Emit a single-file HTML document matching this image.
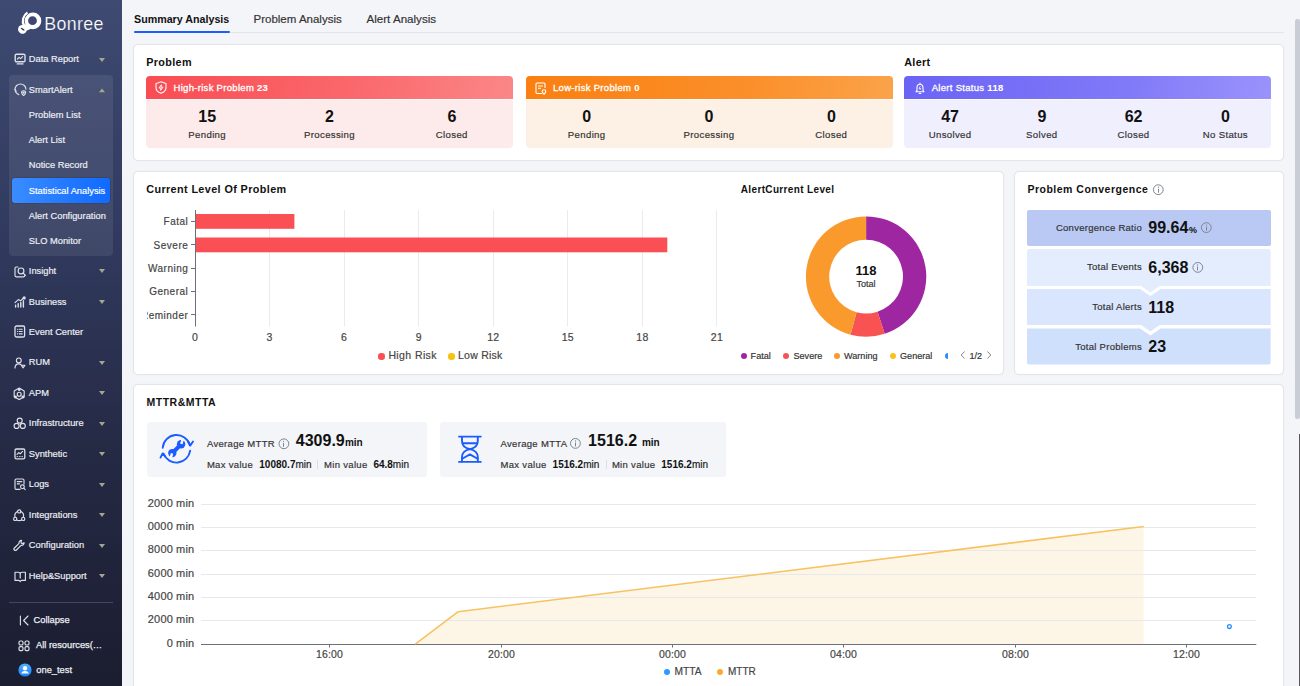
<!DOCTYPE html>
<html><head><meta charset="utf-8"><style>
html,body{margin:0;padding:0;width:1300px;height:686px;overflow:hidden;font-family:"Liberation Sans",sans-serif;background:#f3f4f8;}
text{font-family:"Liberation Sans",sans-serif;}
.r{position:absolute;}
</style></head><body>
<div class="r" style="left:0px;top:0px;width:122px;height:686px;background:linear-gradient(180deg,#3e4a72 0%,#313a5e 35%,#252a45 65%,#1b1d30 100%);"></div>
<svg class="r" style="left:15px;top:8px" width="30" height="28" viewBox="0 0 30 28">
<path d="M12.06 3.40 A11.4 11.4 0 0 0 8.13 18.60 L10.21 17.40 A9 9 0 0 1 12.97 5.44 Z" fill="#fff"/>
<path fill-rule="evenodd" d="M26.3 12.9 A8.3 8.3 0 1 1 9.7 12.9 A8.3 8.3 0 1 1 26.3 12.9 Z M21.9 12.7 A4.4 4.4 0 1 0 13.1 12.7 A4.4 4.4 0 1 0 21.9 12.7 Z" fill="#fff"/>
<path d="M8.2 17.2 L12.2 15.8 L16.5 20.6 L11.5 22.8 Z" fill="#fff"/>
<ellipse cx="7.4" cy="21.4" rx="4.3" ry="4.5" transform="rotate(-30 7.4 21.4)" fill="#fff"/>
<ellipse cx="7.6" cy="21.1" rx="2.3" ry="0.7" transform="rotate(34 7.6 21.1)" fill="#28335c"/>
</svg>
<div class="r" style="left:9px;top:75px;width:104px;height:181px;background:rgba(255,255,255,0.08);border-radius:4px;"></div>
<div class="r" style="left:12px;top:178px;width:98px;height:25px;background:linear-gradient(90deg,#3a8cff,#0f6aff);border-radius:3px;box-shadow:0 0 0 0.6px rgba(40,30,40,0.35);"></div>
<svg class="r" style="left:99px;top:57.5px" width="6" height="5" viewBox="0 0 6 5"><path d="M0 0 L3 4 L6 0Z" fill="#a7a592"/></svg>
<svg class="r" style="left:99px;top:87.6px" width="6" height="5" viewBox="0 0 6 5"><path d="M0 4.2 L3 0.4 L6 4.2Z" fill="#a7a592"/></svg>
<svg class="r" style="left:99px;top:269.2px" width="6" height="5" viewBox="0 0 6 5"><path d="M0 0 L3 4 L6 0Z" fill="#a7a592"/></svg>
<svg class="r" style="left:99px;top:299.7px" width="6" height="5" viewBox="0 0 6 5"><path d="M0 0 L3 4 L6 0Z" fill="#a7a592"/></svg>
<svg class="r" style="left:99px;top:360.6px" width="6" height="5" viewBox="0 0 6 5"><path d="M0 0 L3 4 L6 0Z" fill="#a7a592"/></svg>
<svg class="r" style="left:99px;top:391.1px" width="6" height="5" viewBox="0 0 6 5"><path d="M0 0 L3 4 L6 0Z" fill="#a7a592"/></svg>
<svg class="r" style="left:99px;top:421.6px" width="6" height="5" viewBox="0 0 6 5"><path d="M0 0 L3 4 L6 0Z" fill="#a7a592"/></svg>
<svg class="r" style="left:99px;top:452.1px" width="6" height="5" viewBox="0 0 6 5"><path d="M0 0 L3 4 L6 0Z" fill="#a7a592"/></svg>
<svg class="r" style="left:99px;top:482.6px" width="6" height="5" viewBox="0 0 6 5"><path d="M0 0 L3 4 L6 0Z" fill="#a7a592"/></svg>
<svg class="r" style="left:99px;top:513.0999999999999px" width="6" height="5" viewBox="0 0 6 5"><path d="M0 0 L3 4 L6 0Z" fill="#a7a592"/></svg>
<svg class="r" style="left:99px;top:543.5999999999999px" width="6" height="5" viewBox="0 0 6 5"><path d="M0 0 L3 4 L6 0Z" fill="#a7a592"/></svg>
<svg class="r" style="left:99px;top:574.0999999999999px" width="6" height="5" viewBox="0 0 6 5"><path d="M0 0 L3 4 L6 0Z" fill="#a7a592"/></svg>
<svg class="r" style="left:13.6px;top:53.4px" width="13" height="13" viewBox="0 0 13 13"><g fill="none" stroke="#dfe1e8" stroke-width="1.15" stroke-linecap="round" stroke-linejoin="round"><rect x="1.2" y="1.2" width="9.8" height="7.6" rx="1.3" stroke-width="1.4"/><path d="M3.4 6.2 L5 4.4 L6.6 5.6 L8.6 3.6"/><path d="M3.2 10.9 H9" stroke-width="1.3"/></g></svg>
<svg class="r" style="left:13.8px;top:82.6px" width="13" height="13" viewBox="0 0 13 13"><g fill="none" stroke="#dfe1e8" stroke-width="1.15" stroke-linecap="round" stroke-linejoin="round"><path d="M4.8 11.6 C2.5 10.6 1 8.6 1 6.3 C1 3.3 3.5 1 6.5 1 C9.4 1 11.8 3.2 11.9 6.1"/><path d="M1 6.3 L2.2 8.2"/><path d="M9.6 12.6 C8.4 11.6 7.6 10.6 7.6 9.6 C7.6 8.5 8.5 7.7 9.6 7.7 C10.7 7.7 11.6 8.5 11.6 9.6 C11.6 10.6 10.8 11.6 9.6 12.6 Z"/><circle cx="9.6" cy="9.6" r="0.6" fill="#dfe1e8"/></g></svg>
<svg class="r" style="left:13.5px;top:265.8px" width="13" height="13" viewBox="0 0 13 13"><g fill="none" stroke="#dfe1e8" stroke-width="1.15" stroke-linecap="round" stroke-linejoin="round"><path d="M4 1 H2.2 Q1 1 1 2.2 V9.6 Q1 10.8 2.2 10.8 H9.6 Q10.8 10.8 10.8 9.6 V9"/><circle cx="7" cy="4.9" r="2.9"/><path d="M9.1 7 L11.4 9.4"/></g></svg>
<svg class="r" style="left:13.8px;top:295.6px" width="13" height="13" viewBox="0 0 13 13"><g fill="none" stroke="#dfe1e8" stroke-width="1.15" stroke-linecap="round" stroke-linejoin="round"><path d="M1.6 11 V9.2 M4.2 11 V7.6 M6.8 11 V6.4 M9.4 11 V4.8" stroke-width="1.4"/><path d="M1 6.6 L4.4 3.6 L6.6 4.8 L9.4 2"/><circle cx="10.2" cy="1.9" r="1" fill="#dfe1e8"/></g></svg>
<svg class="r" style="left:14.1px;top:325.3px" width="13" height="13" viewBox="0 0 13 13"><g fill="none" stroke="#dfe1e8" stroke-width="1.15" stroke-linecap="round" stroke-linejoin="round"><rect x="1" y="1" width="9.6" height="11" rx="1.6" stroke-width="1.3"/><path d="M3.4 4.2 H3.6 M5.2 4.2 H8.2 M3.4 6.5 H3.6 M5.2 6.5 H8.2 M3.4 8.8 H3.6 M5.2 8.8 H8.2"/></g></svg>
<svg class="r" style="left:14px;top:356.6px" width="13" height="13" viewBox="0 0 13 13"><g fill="none" stroke="#dfe1e8" stroke-width="1.15" stroke-linecap="round" stroke-linejoin="round"><circle cx="4.8" cy="3.4" r="2.4"/><path d="M1 11 C1 8.4 2.7 6.9 4.8 6.9 C5.6 6.9 6.3 7.1 6.9 7.4"/><path d="M7.2 8.2 H11 L9.1 10.8 Z"/></g></svg>
<svg class="r" style="left:13.3px;top:386.8px" width="13" height="13" viewBox="0 0 13 13"><g fill="none" stroke="#dfe1e8" stroke-width="1.15" stroke-linecap="round" stroke-linejoin="round"><path d="M6.2 1 L11.2 3.9 V9.7 L6.2 12.6 L1.2 9.7 V3.9 Z"/><circle cx="6.2" cy="7.2" r="2"/><circle cx="6.2" cy="2.6" r="0.9" fill="#dfe1e8"/><circle cx="2.4" cy="10" r="0.9" fill="#dfe1e8"/><circle cx="10" cy="10" r="0.9" fill="#dfe1e8"/></g></svg>
<svg class="r" style="left:13.1px;top:417.4px" width="13" height="13" viewBox="0 0 13 13"><g fill="none" stroke="#dfe1e8" stroke-width="1.15" stroke-linecap="round" stroke-linejoin="round"><circle cx="6.7" cy="3.6" r="2.5"/><circle cx="3.6" cy="8.9" r="2.5"/><circle cx="9.8" cy="8.9" r="2.5"/></g></svg>
<svg class="r" style="left:14px;top:447.9px" width="13" height="13" viewBox="0 0 13 13"><g fill="none" stroke="#dfe1e8" stroke-width="1.15" stroke-linecap="round" stroke-linejoin="round"><rect x="1" y="1" width="9.8" height="9.8" rx="1.4" stroke-width="1.3"/><path d="M3 6.4 L4.8 4.6 L6.2 5.8 L8.6 3.4"/><path d="M3 8.6 H3.8 M5.4 8.6 H6.2 M7.8 8.6 H8.6" stroke-width="0.9"/></g></svg>
<svg class="r" style="left:14px;top:478.1px" width="13" height="13" viewBox="0 0 13 13"><g fill="none" stroke="#dfe1e8" stroke-width="1.15" stroke-linecap="round" stroke-linejoin="round"><path d="M6 11.4 H2.2 Q1 11.4 1 10.2 V2.2 Q1 1 2.2 1 H8.8 Q10 1 10 2.2 V6"/><path d="M3.2 3.6 H7.8 M3.2 5.8 H5.6"/><circle cx="8.4" cy="8.8" r="1.9"/><path d="M9.8 10.2 L11.2 11.6"/></g></svg>
<svg class="r" style="left:13.3px;top:509px" width="13" height="13" viewBox="0 0 13 13"><g fill="none" stroke="#dfe1e8" stroke-width="1.15" stroke-linecap="round" stroke-linejoin="round"><path d="M4.4 2.6 A5 5 0 0 0 2 8.2 M10.4 8.2 A5 5 0 0 0 8 2.6 M3.8 10.9 A5 5 0 0 0 8.6 10.9"/><circle cx="6.2" cy="2.4" r="1.6"/><circle cx="2.2" cy="9.9" r="1.6"/><circle cx="10.2" cy="9.9" r="1.6"/></g></svg>
<svg class="r" style="left:13.3px;top:538.6px" width="13" height="13" viewBox="0 0 13 13"><g fill="none" stroke="#dfe1e8" stroke-width="1.15" stroke-linecap="round" stroke-linejoin="round"><path d="M8.6 1.2 C7 1.2 5.8 2.6 6.1 4.3 L1.4 9 C0.8 9.6 0.8 10.4 1.4 11 C2 11.6 2.8 11.6 3.4 11 L8.1 6.3 C9.8 6.6 11.2 5.4 11.2 3.8 L9.6 4.4 L8.2 4.2 L8 2.8 Z"/></g></svg>
<svg class="r" style="left:13.6px;top:569.6px" width="13" height="13" viewBox="0 0 13 13"><g fill="none" stroke="#dfe1e8" stroke-width="1.15" stroke-linecap="round" stroke-linejoin="round"><path d="M1 2.2 V10.4 H4.6 C5.3 10.4 5.8 10.8 6.2 11.6 C6.6 10.8 7.1 10.4 7.8 10.4 H11.4 V2.2 H8 C7 2.2 6.2 2.8 6.2 3.8 C6.2 2.8 5.4 2.2 4.4 2.2 Z"/><path d="M6.2 4 V8"/></g></svg>
<svg class="r" style="left:19px;top:614.6px" width="11" height="11" viewBox="0 0 11 11"><g fill="none" stroke="#dfe1e8" stroke-width="1.15" stroke-linecap="round" stroke-linejoin="round"><path d="M1.4 1 V10" stroke-width="1.1"/><path d="M9 1 L4.6 5.5 L9 10" stroke-width="1.1"/></g></svg>
<svg class="r" style="left:17.7px;top:639.8px" width="12" height="12" viewBox="0 0 12 12"><g fill="none" stroke="#dfe1e8" stroke-width="1.15" stroke-linecap="round" stroke-linejoin="round"><rect x="1" y="1" width="4" height="4" rx="1.3"/><rect x="7" y="1" width="4" height="4" rx="1.3"/><rect x="1" y="6.6" width="4" height="4" rx="1.3"/><rect x="7" y="6.6" width="4" height="4" rx="1.3"/></g></svg>
<svg class="r" style="left:17.5px;top:663.2px" width="14" height="14" viewBox="0 0 14 14"><defs><linearGradient id="avg" x1="0" y1="0" x2="0" y2="1"><stop offset="0" stop-color="#4db3ff"/><stop offset="1" stop-color="#1580ff"/></linearGradient></defs><circle cx="7" cy="7" r="6.6" fill="url(#avg)"/><circle cx="7" cy="5.2" r="2.2" fill="#fff"/><path d="M3.2 10.6 C3.6 8.6 5 7.9 7 7.9 C9 7.9 10.4 8.6 10.8 10.6 Z" fill="#fff"/></svg>
<div class="r" style="left:9px;top:602px;width:104px;height:1px;background:#44475a;"></div>
<div class="r" style="left:122px;top:0px;width:1178px;height:686px;background:#f4f5f9;"></div>
<div class="r" style="left:134px;top:32px;width:1150px;height:1px;background:#e3e5ea;"></div>
<div class="r" style="left:134px;top:30.5px;width:96px;height:2.5px;background:#1a5cff;border-radius:1px;"></div>
<div class="r" style="left:1295px;top:19px;width:4.5px;height:400px;background:#c9cdd6;border-radius:2px;"></div>
<div class="r" style="left:133px;top:44px;width:1151px;height:117px;background:#fff;border:1px solid #e3e5ea;border-radius:5px;box-sizing:border-box;box-shadow:0 0 1.5px rgba(0,0,0,0.05);"></div>
<div class="r" style="left:133px;top:171px;width:871px;height:204px;background:#fff;border:1px solid #e3e5ea;border-radius:5px;box-sizing:border-box;box-shadow:0 0 1.5px rgba(0,0,0,0.05);"></div>
<div class="r" style="left:1014px;top:171px;width:270px;height:204px;background:#fff;border:1px solid #e3e5ea;border-radius:5px;box-sizing:border-box;box-shadow:0 0 1.5px rgba(0,0,0,0.05);"></div>
<div class="r" style="left:133px;top:384px;width:1151px;height:320px;background:#fff;border:1px solid #e3e5ea;border-radius:5px;box-sizing:border-box;box-shadow:0 0 1.5px rgba(0,0,0,0.05);"></div>
<div class="r" style="left:146px;top:76px;width:367px;height:23px;background:linear-gradient(100deg,#f94c52 0%,#fa6a6e 60%,#fb8787 100%);border-radius:4px 4px 0 0;"></div>
<div class="r" style="left:146px;top:99px;width:367px;height:1px;background:#fff6f6;opacity:0.6;"></div>
<div class="r" style="left:146px;top:100px;width:367px;height:47.5px;background:#fdeaea;border-radius:0 0 4px 4px;"></div>
<svg class="r" style="left:155.2px;top:81px" width="12" height="13" viewBox="0 0 12 13"><path d="M6 0.8 L11 2.6 V6.6 C11 9.4 8.8 11.4 6 12.3 C3.2 11.4 1 9.4 1 6.6 V2.6 Z" fill="none" stroke="#fff" stroke-width="1.1"/><path d="M6.4 3.8 L4 7 H6 L5.6 9.4 L8 6.2 H6 Z" fill="none" stroke="#fff" stroke-width="0.9" stroke-linejoin="round"/></svg>
<div class="r" style="left:525.5px;top:76px;width:367px;height:23px;background:linear-gradient(100deg,#fa7f10 0%,#fb8f2a 60%,#fba34a 100%);border-radius:4px 4px 0 0;"></div>
<div class="r" style="left:525.5px;top:99px;width:367px;height:1px;background:#fff6f6;opacity:0.6;"></div>
<div class="r" style="left:525.5px;top:100px;width:367px;height:47.5px;background:#fdf1e6;border-radius:0 0 4px 4px;"></div>
<svg class="r" style="left:535.0px;top:81.5px" width="12" height="13" viewBox="0 0 12 13"><path d="M7 11.5 H2.2 C1.5 11.5 1 11 1 10.3 V2.2 C1 1.5 1.5 1 2.2 1 H8.8 C9.5 1 10 1.5 10 2.2 V6" fill="none" stroke="#fff" stroke-width="1.1"/><path d="M3 4 H8 M3 6.3 H6" stroke="#fff" stroke-width="1.1"/><path d="M9 12.2 C7.9 11.3 7.2 10.4 7.2 9.5 C7.2 8.5 8 7.7 9 7.7 C10 7.7 10.8 8.5 10.8 9.5 C10.8 10.4 10.1 11.3 9 12.2 Z" fill="none" stroke="#fff" stroke-width="1.1"/></svg>
<div class="r" style="left:904.2px;top:76px;width:367px;height:23px;background:linear-gradient(100deg,#6b63f5 0%,#8079f8 60%,#9a93fc 100%);border-radius:4px 4px 0 0;"></div>
<div class="r" style="left:904.2px;top:99px;width:367px;height:1px;background:#fff6f6;opacity:0.6;"></div>
<div class="r" style="left:904.2px;top:100px;width:367px;height:47.5px;background:#f0effd;border-radius:0 0 4px 4px;"></div>
<svg class="r" style="left:913.7px;top:81.5px" width="12" height="13" viewBox="0 0 12 13"><path d="M2 9.8 H10 L9 8.4 V5.6 C9 3.7 7.7 2.2 6 2.2 C4.3 2.2 3 3.7 3 5.6 V8.4 Z" fill="none" stroke="#fff" stroke-width="1.1" stroke-linejoin="round"/><path d="M4.8 11.4 H7.2 M6 0.8 V2.2" stroke="#fff" stroke-width="1.1"/><path d="M6.3 4.3 L5 6.4 H6.8 L5.8 8" fill="none" stroke="#fff" stroke-width="0.8"/></svg>
<svg class="r" style="left:0;top:0" width="1300" height="686" viewBox="0 0 1300 686"><line x1="269.5" y1="210" x2="269.5" y2="326.6" stroke="#e9ebef" stroke-width="1"/><line x1="344.5" y1="210" x2="344.5" y2="326.6" stroke="#e9ebef" stroke-width="1"/><line x1="418.5" y1="210" x2="418.5" y2="326.6" stroke="#e9ebef" stroke-width="1"/><line x1="493.5" y1="210" x2="493.5" y2="326.6" stroke="#e9ebef" stroke-width="1"/><line x1="567.5" y1="210" x2="567.5" y2="326.6" stroke="#e9ebef" stroke-width="1"/><line x1="642.5" y1="210" x2="642.5" y2="326.6" stroke="#e9ebef" stroke-width="1"/><line x1="716.5" y1="210" x2="716.5" y2="326.6" stroke="#e9ebef" stroke-width="1"/><rect x="195.0" y="214" width="99.4" height="14.8" fill="#f94f55"/><rect x="195.0" y="237.5" width="472.3" height="14.8" fill="#f94f55"/><line x1="195.5" y1="210" x2="195.5" y2="326.6" stroke="#6e7079" stroke-width="1"/><line x1="191" y1="221.5" x2="195" y2="221.5" stroke="#6e7079" stroke-width="1"/><line x1="191" y1="244.5" x2="195" y2="244.5" stroke="#6e7079" stroke-width="1"/><line x1="191" y1="268.5" x2="195" y2="268.5" stroke="#6e7079" stroke-width="1"/><line x1="191" y1="291.5" x2="195" y2="291.5" stroke="#6e7079" stroke-width="1"/><line x1="191" y1="314.5" x2="195" y2="314.5" stroke="#6e7079" stroke-width="1"/></svg>
<div class="r" style="left:378.3px;top:353.2px;width:6.4px;height:6.4px;border-radius:50%;background:#f94f55;"></div>
<div class="r" style="left:448.3px;top:353.2px;width:6.4px;height:6.4px;border-radius:50%;background:#f9c20f;"></div>
<svg class="r" style="left:0;top:0" width="1300" height="686" viewBox="0 0 1300 686"><path d="M866.10 216.40 A60.2 60.2 0 0 1 884.70 333.85 L877.50 311.69 A36.9 36.9 0 0 0 866.10 239.70Z" fill="#9e27a1"/><path d="M884.70 333.85 A60.2 60.2 0 0 1 850.52 334.75 L856.55 312.24 A36.9 36.9 0 0 0 877.50 311.69Z" fill="#f95252"/><path d="M850.52 334.75 A60.2 60.2 0 0 1 866.10 216.40 L866.10 239.70 A36.9 36.9 0 0 0 856.55 312.24Z" fill="#fb9a2c"/></svg>
<div class="r" style="left:740.9px;top:352.9px;width:6px;height:6px;border-radius:50%;background:#9e27a1;"></div>
<div class="r" style="left:783.4px;top:352.9px;width:6px;height:6px;border-radius:50%;background:#f95252;"></div>
<div class="r" style="left:834.3px;top:352.9px;width:6px;height:6px;border-radius:50%;background:#fb9a2c;"></div>
<div class="r" style="left:890.3px;top:352.9px;width:6px;height:6px;border-radius:50%;background:#f7c21a;"></div>
<div class="r" style="left:945px;top:352.9px;width:3px;height:6px;overflow:hidden"><div style="width:6px;height:6px;border-radius:50%;background:#2b8cff"></div></div>
<svg class="r" style="left:960px;top:351px" width="6" height="8" viewBox="0 0 6 8"><path d="M4.5 0.5 L1.2 4 L4.5 7.5" fill="none" stroke="#888" stroke-width="1"/></svg>
<svg class="r" style="left:986px;top:351px" width="6" height="8" viewBox="0 0 6 8"><path d="M1.5 0.5 L4.8 4 L1.5 7.5" fill="none" stroke="#888" stroke-width="1"/></svg>
<svg class="r" style="left:1152px;top:183px" width="13" height="13" viewBox="0 0 13 13"><circle cx="6.30" cy="6.70" r="4.9" fill="none" stroke="#7d8591" stroke-width="1"/><path d="M6.5 5.80 V9.70" stroke="#7d8591" stroke-width="1"/><circle cx="6.5" cy="4.20" r="0.65" fill="#7d8591"/></svg>
<div class="r" style="left:1027.4px;top:210px;width:243.6px;height:36px;background:#b9c9f4;border-radius:2px;"></div>
<svg class="r" style="left:1027.4px;top:249px" width="243.6" height="116" viewBox="0 0 243.6 116"><path d="M0 2 Q0 0 2 0 H241.6 Q243.6 0 243.6 2 V37 H132.6 L123.4 43.6 L114.2 37 H0 Z" fill="#e3edfd"/><path d="M0 40 H113 L123.4 47 L133.8 40 H243.6 V76 H132.6 L123.4 82.6 L114.2 76 H0 Z" fill="#d9e6fd"/><path d="M0 79.5 H113 L123.4 86.5 L133.8 79.5 H243.6 V113.4 Q243.6 115.4 241.6 115.4 H2 Q0 115.4 0 113.4 Z" fill="#cfe0fc"/></svg>
<svg class="r" style="left:1200px;top:221px" width="13" height="13" viewBox="0 0 13 13"><circle cx="6.30" cy="6.60" r="4.9" fill="none" stroke="#7d8591" stroke-width="1"/><path d="M6.5 5.70 V9.60" stroke="#7d8591" stroke-width="1"/><circle cx="6.5" cy="4.10" r="0.65" fill="#7d8591"/></svg>
<svg class="r" style="left:1191px;top:261px" width="13" height="13" viewBox="0 0 13 13"><circle cx="6.80" cy="6.40" r="4.9" fill="none" stroke="#7d8591" stroke-width="1"/><path d="M6.5 5.50 V9.40" stroke="#7d8591" stroke-width="1"/><circle cx="6.5" cy="3.90" r="0.65" fill="#7d8591"/></svg>
<div class="r" style="left:146.5px;top:422px;width:280.5px;height:54.6px;background:#f3f5f9;border-radius:3px;"></div>
<div class="r" style="left:439.7px;top:422px;width:286.3px;height:54.6px;background:#f3f5f9;border-radius:3px;"></div>
<svg class="r" style="left:156px;top:430px" width="42" height="38" viewBox="0 0 42 38"><g fill="none" stroke="#1a5cff" stroke-width="1.9" stroke-linecap="round" stroke-linejoin="round"><path d="M6.74 17.74 A13.8 13.8 0 0 1 33.83 15.23"/><path d="M32.2 11.4 L34.3 15.6 L37 11.5"/><path d="M34.17 20.72 A13.8 13.8 0 0 1 7.62 23.75"/><path d="M4.5 27.6 L6.6 23.4 L9.3 26.6"/></g><g transform="translate(20.7 18.7) rotate(-45)"><rect x="-5" y="-2" width="10" height="4" fill="#1a5cff"/><circle cx="6.2" cy="0" r="4.2" fill="#1a5cff"/><circle cx="-6.2" cy="0" r="4.2" fill="#1a5cff"/><rect x="6.6" y="-1.25" width="5" height="2.5" fill="#f3f5f9" transform="rotate(-30 6.6 0)"/><rect x="-11.6" y="-1.25" width="5" height="2.5" fill="#f3f5f9" transform="rotate(-30 -6.6 0)"/></g></svg>
<svg class="r" style="left:277px;top:437px" width="13" height="13" viewBox="0 0 13 13"><circle cx="6.90" cy="6.80" r="4.9" fill="none" stroke="#7d8591" stroke-width="1"/><path d="M6.5 5.90 V9.80" stroke="#7d8591" stroke-width="1"/><circle cx="6.5" cy="4.30" r="0.65" fill="#7d8591"/></svg>
<div class="r" style="left:317px;top:459.5px;width:1px;height:9px;background:#dcdfe6;"></div>
<svg class="r" style="left:452px;top:430px" width="36" height="38" viewBox="0 0 36 38"><g fill="none" stroke="#1a5cff" stroke-width="1.9" stroke-linecap="round" stroke-linejoin="round"><path d="M7 6.6 H28.8 M7 31.9 H28.8"/><path d="M10 7 V11 C10 15.5 13.5 18.2 17.9 19.1 C22.3 18.2 25.8 15.5 25.8 11 V7"/><path d="M10 31.6 V27.2 C10 22.7 13.5 20 17.9 19.1 C22.3 20 25.8 22.7 25.8 27.2 V31.6"/><path d="M11.2 13.3 H24.6"/><path d="M10.2 28.8 L17.9 24.4 L25.6 28.8"/></g></svg>
<svg class="r" style="left:569px;top:437px" width="13" height="13" viewBox="0 0 13 13"><circle cx="6.40" cy="6.40" r="4.9" fill="none" stroke="#7d8591" stroke-width="1"/><path d="M6.5 5.50 V9.40" stroke="#7d8591" stroke-width="1"/><circle cx="6.5" cy="3.90" r="0.65" fill="#7d8591"/></svg>
<div class="r" style="left:605.5px;top:459.5px;width:1px;height:9px;background:#dcdfe6;"></div>
<svg class="r" style="left:0;top:0" width="1300" height="686" viewBox="0 0 1300 686"><path d="M415.3 644.2 L458.2 611.7 L1143.7 526.5 L1143.7 644.2 Z" fill="#fdf6e7"/><line x1="201" y1="504.5" x2="1256.3" y2="504.5" stroke="#e6e8ec" stroke-width="1"/><line x1="201" y1="527.5" x2="1256.3" y2="527.5" stroke="#e6e8ec" stroke-width="1"/><line x1="201" y1="550.5" x2="1256.3" y2="550.5" stroke="#e6e8ec" stroke-width="1"/><line x1="201" y1="574.5" x2="1256.3" y2="574.5" stroke="#e6e8ec" stroke-width="1"/><line x1="201" y1="597.5" x2="1256.3" y2="597.5" stroke="#e6e8ec" stroke-width="1"/><line x1="201" y1="620.5" x2="1256.3" y2="620.5" stroke="#e6e8ec" stroke-width="1"/><line x1="201" y1="644.5" x2="1256.3" y2="644.5" stroke="#6e7079" stroke-width="1"/><polyline points="415.3,644.2 458.2,611.7 1143.7,526.5" fill="none" stroke="#f7c262" stroke-width="1.6" stroke-linejoin="round"/><line x1="329.5" y1="645" x2="329.5" y2="647.5" stroke="#6e7079" stroke-width="1"/><line x1="501.5" y1="645" x2="501.5" y2="647.5" stroke="#6e7079" stroke-width="1"/><line x1="672.5" y1="645" x2="672.5" y2="647.5" stroke="#6e7079" stroke-width="1"/><line x1="843.5" y1="645" x2="843.5" y2="647.5" stroke="#6e7079" stroke-width="1"/><line x1="1015.5" y1="645" x2="1015.5" y2="647.5" stroke="#6e7079" stroke-width="1"/><line x1="1186.5" y1="645" x2="1186.5" y2="647.5" stroke="#6e7079" stroke-width="1"/><circle cx="1229.4" cy="626.6" r="1.9" fill="#fff" stroke="#2b8cff" stroke-width="1.3"/></svg>
<div class="r" style="left:663.7px;top:669.3px;width:6px;height:6px;border-radius:50%;background:#2b9bff;"></div>
<div class="r" style="left:716.8px;top:669.3px;width:6px;height:6px;border-radius:50%;background:#f9ad2a;"></div>
<div class="r" style="left:1299px;top:434px;width:1px;height:252px;background:#5a5a5a;"></div><svg class="r" style="left:0;top:0" width="1300" height="686" viewBox="0 0 1300 686"><defs><clipPath id="clipL"><rect x="147" y="0" width="200" height="686"/></clipPath></defs><text x="44.30" y="30.00" font-size="17.8" fill="#fff" text-anchor="start" letter-spacing="0.35" style="stroke:#3c4870;stroke-width:0.2px;">Bonree</text>
<text x="28.80" y="62.30" font-size="9.3" fill="#eceef3" text-anchor="start" stroke="#eceef3" stroke-width="0.18">Data Report</text>
<text x="28.80" y="92.70" font-size="9.3" fill="#eceef3" text-anchor="start" stroke="#eceef3" stroke-width="0.18">SmartAlert</text>
<text x="28.80" y="274.00" font-size="9.3" fill="#eceef3" text-anchor="start" stroke="#eceef3" stroke-width="0.18">Insight</text>
<text x="28.80" y="304.50" font-size="9.3" fill="#eceef3" text-anchor="start" stroke="#eceef3" stroke-width="0.18">Business</text>
<text x="28.80" y="334.90" font-size="9.3" fill="#eceef3" text-anchor="start" stroke="#eceef3" stroke-width="0.18">Event Center</text>
<text x="28.80" y="365.40" font-size="9.3" fill="#eceef3" text-anchor="start" stroke="#eceef3" stroke-width="0.18">RUM</text>
<text x="28.80" y="395.90" font-size="9.3" fill="#eceef3" text-anchor="start" stroke="#eceef3" stroke-width="0.18">APM</text>
<text x="28.80" y="426.40" font-size="9.3" fill="#eceef3" text-anchor="start" stroke="#eceef3" stroke-width="0.18">Infrastructure</text>
<text x="28.80" y="456.90" font-size="9.3" fill="#eceef3" text-anchor="start" stroke="#eceef3" stroke-width="0.18">Synthetic</text>
<text x="28.80" y="487.40" font-size="9.3" fill="#eceef3" text-anchor="start" stroke="#eceef3" stroke-width="0.18">Logs</text>
<text x="28.80" y="517.90" font-size="9.3" fill="#eceef3" text-anchor="start" stroke="#eceef3" stroke-width="0.18">Integrations</text>
<text x="28.80" y="548.40" font-size="9.3" fill="#eceef3" text-anchor="start" stroke="#eceef3" stroke-width="0.18">Configuration</text>
<text x="28.80" y="578.90" font-size="9.3" fill="#eceef3" text-anchor="start" stroke="#eceef3" stroke-width="0.18">Help&amp;Support</text>
<text x="28.80" y="117.80" font-size="9.3" fill="#eceef3" text-anchor="start" stroke="#eceef3" stroke-width="0.18">Problem List</text>
<text x="28.80" y="142.90" font-size="9.3" fill="#eceef3" text-anchor="start" stroke="#eceef3" stroke-width="0.18">Alert List</text>
<text x="28.80" y="168.00" font-size="9.3" fill="#eceef3" text-anchor="start" stroke="#eceef3" stroke-width="0.18">Notice Record</text>
<text x="28.80" y="193.70" font-size="9.3" fill="#fff" text-anchor="start" stroke="#fff" stroke-width="0.18">Statistical Analysis</text>
<text x="28.80" y="218.80" font-size="9.3" fill="#eceef3" text-anchor="start" stroke="#eceef3" stroke-width="0.18">Alert Configuration</text>
<text x="28.80" y="243.90" font-size="9.3" fill="#eceef3" text-anchor="start" stroke="#eceef3" stroke-width="0.18">SLO Monitor</text>
<text x="33.50" y="622.90" font-size="9.3" fill="#eceef3" text-anchor="start" stroke="#eceef3" stroke-width="0.25">Collapse</text>
<text x="36.00" y="647.50" font-size="9.3" fill="#eceef3" text-anchor="start" stroke="#eceef3" stroke-width="0.25">All resources(…</text>
<text x="36.30" y="673.10" font-size="9.3" fill="#eceef3" text-anchor="start" stroke="#eceef3" stroke-width="0.25">one_test</text>
<text x="134.00" y="22.50" font-size="10.7" fill="#111" text-anchor="start" font-weight="700">Summary Analysis</text>
<text x="253.50" y="22.50" font-size="11.5" fill="#333" text-anchor="start" stroke="#333" stroke-width="0.18">Problem Analysis</text>
<text x="366.50" y="22.50" font-size="11.6" fill="#333" text-anchor="start" stroke="#333" stroke-width="0.18">Alert Analysis</text>
<text x="146.20" y="66.20" font-size="10.8" fill="#111" text-anchor="start" font-weight="700" letter-spacing="0.35">Problem</text>
<text x="904.20" y="66.20" font-size="10.8" fill="#111" text-anchor="start" font-weight="700" letter-spacing="0.35">Alert</text>
<text x="173.50" y="90.8" font-size="9.5" fill="#fff" stroke="#fff" stroke-width="0.3" letter-spacing="0.3">High-risk Problem <tspan font-weight="700" stroke-width="0.1">23</tspan></text>
<text x="207.17" y="121.90" font-size="16" fill="#111" text-anchor="middle" font-weight="700">15</text>
<text x="207.17" y="137.80" font-size="9.6" fill="#333" text-anchor="middle" letter-spacing="0.35" stroke="#333" stroke-width="0.18">Pending</text>
<text x="329.50" y="121.90" font-size="16" fill="#111" text-anchor="middle" font-weight="700">2</text>
<text x="329.50" y="137.80" font-size="9.6" fill="#333" text-anchor="middle" letter-spacing="0.35" stroke="#333" stroke-width="0.18">Processing</text>
<text x="451.83" y="121.90" font-size="16" fill="#111" text-anchor="middle" font-weight="700">6</text>
<text x="451.83" y="137.80" font-size="9.6" fill="#333" text-anchor="middle" letter-spacing="0.35" stroke="#333" stroke-width="0.18">Closed</text>
<text x="553.00" y="90.8" font-size="9.5" fill="#fff" stroke="#fff" stroke-width="0.3" letter-spacing="0.3">Low-risk Problem <tspan font-weight="700" stroke-width="0.1">0</tspan></text>
<text x="586.67" y="121.90" font-size="16" fill="#111" text-anchor="middle" font-weight="700">0</text>
<text x="586.67" y="137.80" font-size="9.6" fill="#333" text-anchor="middle" letter-spacing="0.35" stroke="#333" stroke-width="0.18">Pending</text>
<text x="709.00" y="121.90" font-size="16" fill="#111" text-anchor="middle" font-weight="700">0</text>
<text x="709.00" y="137.80" font-size="9.6" fill="#333" text-anchor="middle" letter-spacing="0.35" stroke="#333" stroke-width="0.18">Processing</text>
<text x="831.33" y="121.90" font-size="16" fill="#111" text-anchor="middle" font-weight="700">0</text>
<text x="831.33" y="137.80" font-size="9.6" fill="#333" text-anchor="middle" letter-spacing="0.35" stroke="#333" stroke-width="0.18">Closed</text>
<text x="931.70" y="90.8" font-size="9.5" fill="#fff" stroke="#fff" stroke-width="0.3" letter-spacing="0.3">Alert Status <tspan font-weight="700" stroke-width="0.1">118</tspan></text>
<text x="950.08" y="121.90" font-size="16" fill="#111" text-anchor="middle" font-weight="700">47</text>
<text x="950.08" y="137.80" font-size="9.6" fill="#333" text-anchor="middle" letter-spacing="0.35" stroke="#333" stroke-width="0.18">Unsolved</text>
<text x="1041.83" y="121.90" font-size="16" fill="#111" text-anchor="middle" font-weight="700">9</text>
<text x="1041.83" y="137.80" font-size="9.6" fill="#333" text-anchor="middle" letter-spacing="0.35" stroke="#333" stroke-width="0.18">Solved</text>
<text x="1133.58" y="121.90" font-size="16" fill="#111" text-anchor="middle" font-weight="700">62</text>
<text x="1133.58" y="137.80" font-size="9.6" fill="#333" text-anchor="middle" letter-spacing="0.35" stroke="#333" stroke-width="0.18">Closed</text>
<text x="1225.33" y="121.90" font-size="16" fill="#111" text-anchor="middle" font-weight="700">0</text>
<text x="1225.33" y="137.80" font-size="9.6" fill="#333" text-anchor="middle" letter-spacing="0.35" stroke="#333" stroke-width="0.18">No Status</text>
<text x="146.20" y="193.10" font-size="10.8" fill="#111" text-anchor="start" font-weight="700" letter-spacing="0.4">Current Level Of Problem</text>
<text x="188.30" y="225.26" font-size="10" fill="#444" text-anchor="end" letter-spacing="0.5" clip-path="url(#clipL)" stroke="#444" stroke-width="0.18">Fatal</text>
<text x="188.30" y="248.58" font-size="10" fill="#444" text-anchor="end" letter-spacing="0.5" clip-path="url(#clipL)" stroke="#444" stroke-width="0.18">Severe</text>
<text x="188.30" y="271.90" font-size="10" fill="#444" text-anchor="end" letter-spacing="0.5" clip-path="url(#clipL)" stroke="#444" stroke-width="0.18">Warning</text>
<text x="188.30" y="295.22" font-size="10" fill="#444" text-anchor="end" letter-spacing="0.5" clip-path="url(#clipL)" stroke="#444" stroke-width="0.18">General</text>
<text x="188.30" y="318.54" font-size="10" fill="#444" text-anchor="end" letter-spacing="0.5" clip-path="url(#clipL)" stroke="#444" stroke-width="0.18">Reminder</text>
<text x="195.00" y="340.80" font-size="10.5" fill="#444" text-anchor="middle" letter-spacing="0.3" stroke="#444" stroke-width="0.18">0</text>
<text x="269.57" y="340.80" font-size="10.5" fill="#444" text-anchor="middle" letter-spacing="0.3" stroke="#444" stroke-width="0.18">3</text>
<text x="344.14" y="340.80" font-size="10.5" fill="#444" text-anchor="middle" letter-spacing="0.3" stroke="#444" stroke-width="0.18">6</text>
<text x="418.71" y="340.80" font-size="10.5" fill="#444" text-anchor="middle" letter-spacing="0.3" stroke="#444" stroke-width="0.18">9</text>
<text x="493.28" y="340.80" font-size="10.5" fill="#444" text-anchor="middle" letter-spacing="0.3" stroke="#444" stroke-width="0.18">12</text>
<text x="567.85" y="340.80" font-size="10.5" fill="#444" text-anchor="middle" letter-spacing="0.3" stroke="#444" stroke-width="0.18">15</text>
<text x="642.42" y="340.80" font-size="10.5" fill="#444" text-anchor="middle" letter-spacing="0.3" stroke="#444" stroke-width="0.18">18</text>
<text x="716.99" y="340.80" font-size="10.5" fill="#444" text-anchor="middle" letter-spacing="0.3" stroke="#444" stroke-width="0.18">21</text>
<text x="388.40" y="359.30" font-size="10.5" fill="#444" text-anchor="start" letter-spacing="0.4" stroke="#444" stroke-width="0.18">High Risk</text>
<text x="458.00" y="359.30" font-size="10.5" fill="#444" text-anchor="start" letter-spacing="0.25" stroke="#444" stroke-width="0.18">Low Risk</text>
<text x="740.80" y="193.10" font-size="10" fill="#111" text-anchor="start" font-weight="700" letter-spacing="0.35">AlertCurrent Level</text>
<text x="866.10" y="274.50" font-size="13" fill="#111" text-anchor="middle" font-weight="700">118</text>
<text x="866.10" y="286.70" font-size="9" fill="#333" text-anchor="middle" stroke="#333" stroke-width="0.18">Total</text>
<text x="750.60" y="358.60" font-size="9.1" fill="#333" text-anchor="start" stroke="#333" stroke-width="0.18">Fatal</text>
<text x="793.50" y="358.60" font-size="9.1" fill="#333" text-anchor="start" stroke="#333" stroke-width="0.18">Severe</text>
<text x="844.00" y="358.60" font-size="9.1" fill="#333" text-anchor="start" stroke="#333" stroke-width="0.18">Warning</text>
<text x="900.00" y="358.60" font-size="9.1" fill="#333" text-anchor="start" stroke="#333" stroke-width="0.18">General</text>
<text x="969.50" y="358.60" font-size="9.1" fill="#333" text-anchor="start" stroke="#333" stroke-width="0.18">1/2</text>
<text x="1027.40" y="193.20" font-size="10.5" fill="#111" text-anchor="start" font-weight="700" letter-spacing="0.5">Problem Convergence</text>
<text x="1142.00" y="230.80" font-size="9.5" fill="#333" text-anchor="end" letter-spacing="0.28" stroke="#333" stroke-width="0.18">Convergence Ratio</text>
<text x="1148.30" y="233.00" font-size="16" fill="#111" text-anchor="start" font-weight="700">99.64</text>
<text x="1189.00" y="233.00" font-size="9" fill="#111" text-anchor="start" font-weight="700">%</text>
<text x="1142.00" y="270.40" font-size="9.5" fill="#333" text-anchor="end" letter-spacing="0.28" stroke="#333" stroke-width="0.18">Total Events</text>
<text x="1148.30" y="272.80" font-size="16" fill="#111" text-anchor="start" font-weight="700">6,368</text>
<text x="1142.00" y="310.20" font-size="9.5" fill="#333" text-anchor="end" letter-spacing="0.28" stroke="#333" stroke-width="0.18">Total Alerts</text>
<text x="1148.30" y="312.60" font-size="16" fill="#111" text-anchor="start" font-weight="700">118</text>
<text x="1142.00" y="349.60" font-size="9.5" fill="#333" text-anchor="end" letter-spacing="0.28" stroke="#333" stroke-width="0.18">Total Problems</text>
<text x="1148.30" y="352.00" font-size="16" fill="#111" text-anchor="start" font-weight="700">23</text>
<text x="146.50" y="405.80" font-size="10.5" fill="#111" text-anchor="start" font-weight="700" letter-spacing="0.5">MTTR&amp;MTTA</text>
<text x="206.90" y="447.30" font-size="9.5" fill="#333" text-anchor="start" letter-spacing="0.32" stroke="#333" stroke-width="0.18">Average MTTR</text>
<text x="295.80" y="446.20" font-size="16" fill="#111" text-anchor="start" font-weight="700">4309.9</text>
<text x="344.90" y="446.20" font-size="10" fill="#111" text-anchor="start" font-weight="700">min</text>
<text x="206.90" y="467.60" font-size="9.5" fill="#333" text-anchor="start" letter-spacing="0.32" stroke="#333" stroke-width="0.18">Max value</text>
<text x="259.3" y="467.6" font-size="10" fill="#111"><tspan font-weight="700">10080.7</tspan><tspan fill="#222" stroke="#222" stroke-width="0.18">min</tspan></text>
<text x="324.00" y="467.60" font-size="9.5" fill="#333" text-anchor="start" letter-spacing="0.32" stroke="#333" stroke-width="0.18">Min value</text>
<text x="373.4" y="467.6" font-size="10" fill="#111"><tspan font-weight="700">64.8</tspan><tspan fill="#222" stroke="#222" stroke-width="0.18">min</tspan></text>
<text x="500.50" y="447.30" font-size="9.5" fill="#333" text-anchor="start" letter-spacing="0.32" stroke="#333" stroke-width="0.18">Average MTTA</text>
<text x="588.10" y="446.20" font-size="16" fill="#111" text-anchor="start" font-weight="700">1516.2</text>
<text x="641.90" y="446.20" font-size="10" fill="#111" text-anchor="start" font-weight="700">min</text>
<text x="500.50" y="467.60" font-size="9.5" fill="#333" text-anchor="start" letter-spacing="0.32" stroke="#333" stroke-width="0.18">Max value</text>
<text x="552.6" y="467.6" font-size="10" fill="#111"><tspan font-weight="700">1516.2</tspan><tspan fill="#222" stroke="#222" stroke-width="0.18">min</tspan></text>
<text x="611.90" y="467.60" font-size="9.5" fill="#333" text-anchor="start" letter-spacing="0.32" stroke="#333" stroke-width="0.18">Min value</text>
<text x="661.3" y="467.6" font-size="10" fill="#111"><tspan font-weight="700">1516.2</tspan><tspan fill="#222" stroke="#222" stroke-width="0.18">min</tspan></text>
<text x="194.30" y="507.30" font-size="11" fill="#444" text-anchor="end" letter-spacing="0.15" clip-path="url(#clipL)" stroke="#444" stroke-width="0.18">12000 min</text>
<text x="194.30" y="530.30" font-size="11" fill="#444" text-anchor="end" letter-spacing="0.15" clip-path="url(#clipL)" stroke="#444" stroke-width="0.18">10000 min</text>
<text x="194.30" y="553.30" font-size="11" fill="#444" text-anchor="end" letter-spacing="0.15" clip-path="url(#clipL)" stroke="#444" stroke-width="0.18">8000 min</text>
<text x="194.30" y="577.30" font-size="11" fill="#444" text-anchor="end" letter-spacing="0.15" clip-path="url(#clipL)" stroke="#444" stroke-width="0.18">6000 min</text>
<text x="194.30" y="600.30" font-size="11" fill="#444" text-anchor="end" letter-spacing="0.15" clip-path="url(#clipL)" stroke="#444" stroke-width="0.18">4000 min</text>
<text x="194.30" y="623.30" font-size="11" fill="#444" text-anchor="end" letter-spacing="0.15" clip-path="url(#clipL)" stroke="#444" stroke-width="0.18">2000 min</text>
<text x="194.30" y="647.30" font-size="11" fill="#444" text-anchor="end" letter-spacing="0.15" clip-path="url(#clipL)" stroke="#444" stroke-width="0.18">0 min</text>
<text x="329.50" y="658.00" font-size="10.5" fill="#444" text-anchor="middle" letter-spacing="0.1" stroke="#444" stroke-width="0.18">16:00</text>
<text x="501.50" y="658.00" font-size="10.5" fill="#444" text-anchor="middle" letter-spacing="0.1" stroke="#444" stroke-width="0.18">20:00</text>
<text x="672.50" y="658.00" font-size="10.5" fill="#444" text-anchor="middle" letter-spacing="0.1" stroke="#444" stroke-width="0.18">00:00</text>
<text x="843.50" y="658.00" font-size="10.5" fill="#444" text-anchor="middle" letter-spacing="0.1" stroke="#444" stroke-width="0.18">04:00</text>
<text x="1015.50" y="658.00" font-size="10.5" fill="#444" text-anchor="middle" letter-spacing="0.1" stroke="#444" stroke-width="0.18">08:00</text>
<text x="1186.50" y="658.00" font-size="10.5" fill="#444" text-anchor="middle" letter-spacing="0.1" stroke="#444" stroke-width="0.18">12:00</text>
<text x="674.50" y="675.00" font-size="10.2" fill="#444" text-anchor="start" stroke="#444" stroke-width="0.18">MTTA</text>
<text x="728.00" y="675.00" font-size="10" fill="#444" text-anchor="start" stroke="#444" stroke-width="0.18">MTTR</text></svg>
</body></html>
